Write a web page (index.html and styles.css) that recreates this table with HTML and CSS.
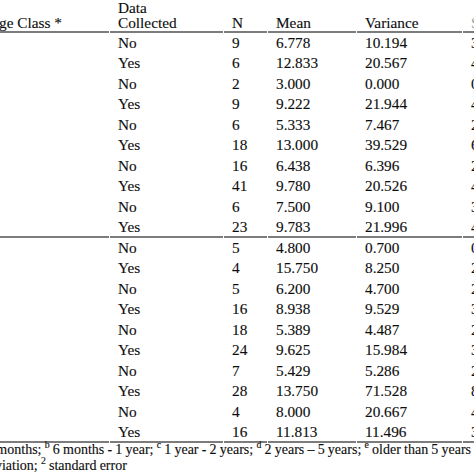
FILE: index.html
```html
<!DOCTYPE html>
<html>
<head>
<meta charset="utf-8">
<link rel="stylesheet" href="styles.css">
</head>
<body>
<div class="page">
  <table class="stats">
    <colgroup>
      <col class="w-age"><col class="w-dc"><col class="w-n"><col class="w-mean"><col class="w-var"><col class="w-sd">
    </colgroup>
    <thead>
      <tr><th>Age Class *</th><th>Data<br>Collected</th><th>N</th><th>Mean</th><th>Variance</th><th class="faint">SD<sup>1</sup></th></tr>
    </thead>
    <tbody class="grp">
      <tr><td></td><td>No</td><td>9</td><td>6.778</td><td>10.194</td><td>3.193</td></tr>
      <tr><td></td><td>Yes</td><td>6</td><td>12.833</td><td>20.567</td><td>4.535</td></tr>
      <tr><td></td><td>No</td><td>2</td><td>3.000</td><td>0.000</td><td>0.000</td></tr>
      <tr><td></td><td>Yes</td><td>9</td><td>9.222</td><td>21.944</td><td>4.684</td></tr>
      <tr><td></td><td>No</td><td>6</td><td>5.333</td><td>7.467</td><td>2.733</td></tr>
      <tr><td></td><td>Yes</td><td>18</td><td>13.000</td><td>39.529</td><td>6.287</td></tr>
      <tr><td></td><td>No</td><td>16</td><td>6.438</td><td>6.396</td><td>2.529</td></tr>
      <tr><td></td><td>Yes</td><td>41</td><td>9.780</td><td>20.526</td><td>4.531</td></tr>
      <tr><td></td><td>No</td><td>6</td><td>7.500</td><td>9.100</td><td>3.017</td></tr>
      <tr><td></td><td>Yes</td><td>23</td><td>9.783</td><td>21.996</td><td>4.690</td></tr>
    </tbody>
    <tbody class="grp">
      <tr><td></td><td>No</td><td>5</td><td>4.800</td><td>0.700</td><td>0.837</td></tr>
      <tr><td></td><td>Yes</td><td>4</td><td>15.750</td><td>8.250</td><td>2.872</td></tr>
      <tr><td></td><td>No</td><td>5</td><td>6.200</td><td>4.700</td><td>2.168</td></tr>
      <tr><td></td><td>Yes</td><td>16</td><td>8.938</td><td>9.529</td><td>3.087</td></tr>
      <tr><td></td><td>No</td><td>18</td><td>5.389</td><td>4.487</td><td>2.118</td></tr>
      <tr><td></td><td>Yes</td><td>24</td><td>9.625</td><td>15.984</td><td>3.998</td></tr>
      <tr><td></td><td>No</td><td>7</td><td>5.429</td><td>5.286</td><td>2.299</td></tr>
      <tr><td></td><td>Yes</td><td>28</td><td>13.750</td><td>71.528</td><td>8.457</td></tr>
      <tr><td></td><td>No</td><td>4</td><td>8.000</td><td>20.667</td><td>4.546</td></tr>
      <tr><td></td><td>Yes</td><td>16</td><td>11.813</td><td>11.496</td><td>3.391</td></tr>
    </tbody>
  </table>
  <div class="notes">
    <p class="note-line first"><sup>a</sup> &lt; 6 months; <sup>b</sup> 6 months - 1 year; <sup>c</sup> 1 year - 2 years; <sup>d</sup> 2 years – 5 years; <sup>e</sup> older than 5 years</p>
    <p class="note-line"><sup>1</sup> standard deviation; <sup>2</sup> standard error</p>
  </div>
</div>
</body>
</html>
```

FILE: styles.css
```css
html, body {
  margin: 0;
  padding: 0;
  background: #ffffff;
}

body {
  width: 474px;
  height: 474px;
  overflow: hidden;
}

.page {
  margin-left: -21px;
  width: 620px;
  font-family: "Liberation Serif", "Times New Roman", serif;
  font-size: 15.3px;
  color: #0d0d0d;
  -webkit-text-stroke: 0.12px #0d0d0d;
}

.stats {
  table-layout: fixed;
  width: 585px;
  border-collapse: separate;
  border-spacing: 1px 0;
}

.w-age { width: 129px; }
.w-dc { width: 113px; }
.w-n { width: 43px; }
.w-mean { width: 88px; }
.w-var { width: 105px; }
.w-sd { width: 100px; }

.stats th {
  font-weight: normal;
  text-align: left;
  vertical-align: bottom;
  white-space: nowrap;
  padding: 0 0 2.5px 8px;
  line-height: 15.1px;
  box-shadow: inset 0 -2px 0 #7c7c7c;
}

.stats th.faint {
  color: #a0a0a0;
  -webkit-text-stroke: 0;
}

.stats sup {
  font-size: 0.7em;
  line-height: 0;
}

.stats td {
  padding: 0 0 0 8px;
  line-height: 20.5px;
  white-space: nowrap;
}

.grp tr:last-child td {
  box-shadow: inset 0 -2px 0 #7c7c7c;
}

.notes {
  font-size: 14px;
  line-height: 16.5px;
  word-spacing: -0.3px;
  margin-top: -1px;
  margin-left: -56px;
  white-space: nowrap;
}

.note-line {
  margin: 0;
}

.note-line.first {
  text-indent: 44.5px;
}

.note-line sup {
  font-size: 0.7em;
  line-height: 0;
}
```
